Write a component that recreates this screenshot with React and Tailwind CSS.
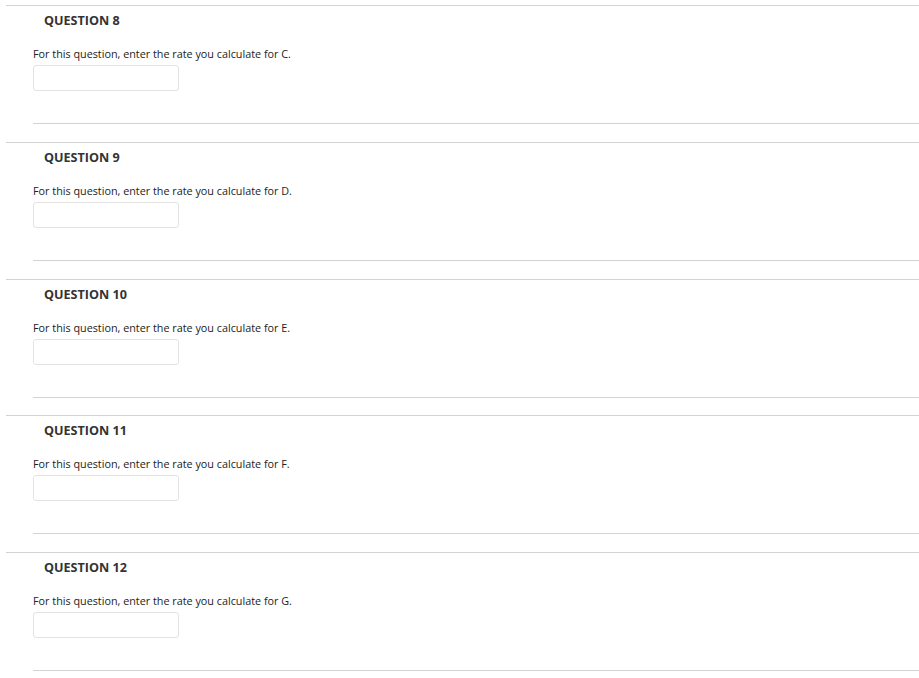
const questions = [
  { n: 8, letter: "C" },
  { n: 9, letter: "D" },
  { n: 10, letter: "E" },
  { n: 11, letter: "F" },
  { n: 12, letter: "G" },
];

function Question({ n, letter }) {
  return (
    <div className="ml-[6px] border-t border-[#d3d3d3] pt-[7px] pb-[17.75px]">
      <div className="pl-[38px] h-[16px] leading-[16px] text-[12.6px] font-bold text-[#333]">
        QUESTION {n}
      </div>
      <div className="pl-[27px] pt-[18px]">
        <div className="h-[14px] leading-[14px] text-[10.8px] text-[#222]">
          For this question, enter the rate you calculate for {letter}.
        </div>
        <input
          type="text"
          className="mt-[4px] block w-[146px] h-[26px] rounded-[3px] border border-[#e3e3e3] bg-white outline-none"
        />
        <div className="mt-[32px] border-t border-[#d3d3d3]" />
      </div>
    </div>
  );
}

export default function App() {
  return (
    <div
      className="min-h-screen bg-white pt-[5px]"
      style={{ fontFamily: '"Open Sans", "Liberation Sans", sans-serif' }}
    >
      {questions.map((q) => (
        <Question key={q.n} {...q} />
      ))}
    </div>
  );
}
